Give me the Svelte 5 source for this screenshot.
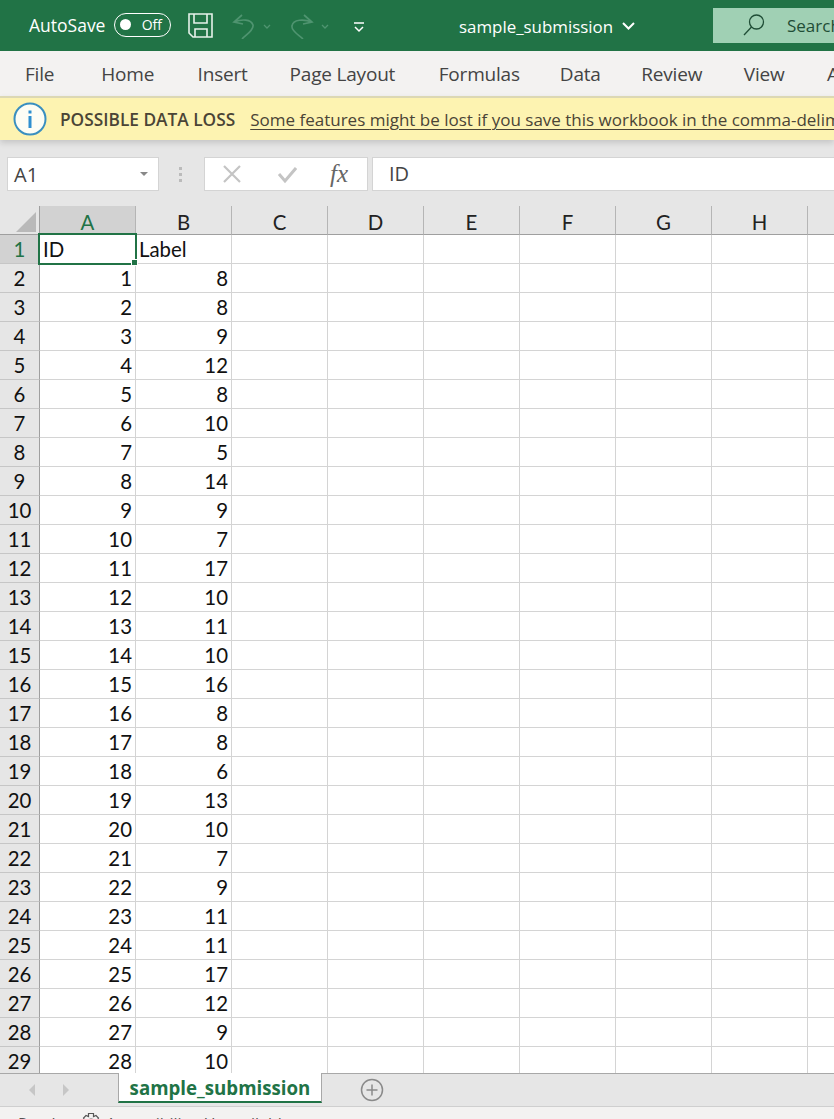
<script>
  const cols = ['A','B','C','D','E','F','G','H'];
  const a = [8,8,9,12,8,10,5,14,9,7,17,10,11,10,16,8,8,6,13,10,7,9,11,11,17,12,9,10];
  const tabs = ['File','Home','Insert','Page Layout','Formulas','Data','Review','View','Automate'];
  const rows = a.map((b,i)=>({n:i+2,id:i+1,b}));
</script>

<div class="app">
  <header class="title">
    <span class="autosave">AutoSave</span>
    <span class="toggle"><i class="knob"></i><span>Off</span></span>
    <svg class="save" viewBox="0 0 25 25" width="25" height="25" fill="none" stroke="#e6f2ea" stroke-width="1.6"><path d="M1 1h23v23H5l-4-4z"/><path d="M6 1v9h13V1M7 24v-8h12v8"/></svg>
    <svg class="undo" viewBox="0 0 40 26" width="40" height="26" fill="none" stroke="#4f9470" stroke-width="1.7"><path d="M10 2L2 9l9 2M2 9c8-3 17-3 19 3 1 5-7 10-11 14"/><path d="M32 12l3 3 3-3" stroke-width="1.3"/></svg>
    <svg class="redo" viewBox="0 0 40 26" width="40" height="26" fill="none" stroke="#4f9470" stroke-width="1.7"><path d="M14 2l8 7-9 2M22 9c-8-3-19-3-20 4-1 5 7 9 11 13"/><path d="M32 12l3 3 3-3" stroke-width="1.3"/></svg>
    <svg class="qat" viewBox="0 0 12 12" width="12" height="12" fill="none" stroke="#fff" stroke-width="1.5"><path d="M1 2h10M2 6l4 4 4-4"/></svg>
    <span class="doc">sample_submission</span>
    <svg class="chev" viewBox="0 0 13 8" width="13" height="8" fill="none" stroke="#fff" stroke-width="2"><path d="M1 1l5.500 5.500L12 1"/></svg>
    <div class="search">
      <svg viewBox="0 0 24 24" width="24" height="24" fill="none" stroke="#1f4d36" stroke-width="1.3"><circle cx="14.500" cy="9" r="7"/><path d="M9.500 14L2 22"/></svg>
      <span>Search</span>
    </div>
  </header>

  <nav class="tabs">
    {#each tabs as t}<span>{t}</span>{/each}
  </nav>

  <div class="notice">
    <svg viewBox="0 0 34 34" width="34" height="34"><circle cx="17" cy="17" r="15.500" fill="#fdfdf5" stroke="#3a8fc0" stroke-width="2"/><rect x="15.500" y="14" width="3" height="12" fill="#2f8fd0"/><rect x="15.500" y="8.500" width="3" height="3" fill="#2f8fd0"/></svg>
    <b>POSSIBLE DATA LOSS</b>
    <u>Some features might be lost if you save this workbook in the comma-delimited (.csv) format.</u>
  </div>

  <div class="formula">
    <div class="namebox"><span>A1</span><i class="caret"></i></div>
    <div class="dots"><i></i><i></i><i></i></div>
    <div class="fx">
      <svg viewBox="0 0 20 20" width="20" height="20" fill="none" stroke="#c4c4c4" stroke-width="2.200"><path d="M2 2l16 16M18 2L2 18"/></svg>
      <svg viewBox="0 0 20 20" width="20" height="20" fill="none" stroke="#c4c4c4" stroke-width="3"><path d="M2 10l6 7L19 4"/></svg>
      <em>fx</em>
    </div>
    <div class="input">ID</div>
  </div>

  <div class="sheet">
    <div class="row head">
      <div class="corner"><i></i></div>
      {#each cols as c, i}<div class="ch" class:sel={i===0}>{c}</div>{/each}
      <div class="ch"></div>
    </div>
    <div class="row">
      <div class="rh sel">1</div>
      <div class="c active">ID<i class="handle"></i></div>
      <div class="c">Label</div>
      {#each Array(7) as _}<div class="c"></div>{/each}
    </div>
    {#each rows as r}
      <div class="row">
        <div class="rh">{r.n}</div>
        <div class="c num">{r.id}</div>
        <div class="c num">{r.b}</div>
        {#each Array(7) as _}<div class="c"></div>{/each}
      </div>
    {/each}
  </div>

  <div class="sheetbar">
    <svg class="nav" viewBox="0 0 10 14" width="10" height="14"><path d="M8 1L2 7l6 6z" fill="#c6c6c6"/></svg>
    <svg class="nav" viewBox="0 0 10 14" width="10" height="14"><path d="M2 1l6 6-6 6z" fill="#c6c6c6"/></svg>
    <div class="tab">sample_submission</div>
    <svg class="add" viewBox="0 0 24 24" width="24" height="24" fill="none" stroke="#8a8a8a" stroke-width="1.500"><circle cx="12" cy="12" r="10.500"/><path d="M12 6.500v11M6.500 12h11"/></svg>
  </div>

  <footer class="status">
    <span class="ready">Ready</span>
    <svg class="gear" viewBox="0 0 20 20" width="20" height="20" fill="none" stroke="#555" stroke-width="1.200"><path d="M7.500 1.500h5v3l2.500-1 2.500 2.500-1.500 2.500h3v4h-3l1.500 2.500-2.500 2.500-2.500-1v3h-5v-3l-2.500 1-2.500-2.500 1.500-2.500h-3v-4h3l-1.500-2.500 2.500-2.500 2.500 1z"/><circle cx="10" cy="10" r="3"/></svg>
    <span class="access">Accessibility: Unavailable</span>
  </footer>
</div>

<style>
  :global(body) { margin: 0; overflow: hidden; background: #fff; }
  .app { width: 834px; height: 1119px; overflow: hidden; display: flex; flex-direction: column; font-family: "Open Sans", sans-serif; }

  .title { height: 51px; flex: none; background: #217346; color: #fff; display: flex; align-items: center; white-space: nowrap; padding-left: 29px; }
  .title > * { flex: none; }
  .autosave { font-size: 17.500px; width: 85px; margin-top: -2px; }
  .toggle { width: 57px; height: 24px; box-sizing: border-box; border: 1.500px solid #fff; border-radius: 12px; display: flex; align-items: center; justify-content: space-between; padding: 0 8px 0 5px; font-size: 14px; margin-top: -2px; }
  .knob { width: 11px; height: 11px; border-radius: 50%; background: #fff; }
  .save { margin-left: 17px; }
  .undo { margin-left: 19px; }
  .redo { margin-left: 18px; }
  .qat { margin-left: 23px; margin-top: 2px; }
  .doc { margin-left: 94px; font-size: 16.900px; margin-top: 2px; width: 163px; }
  .chev { margin-top: 1px; }
  .search { margin-left: 78px; margin-top: -1px; width: 200px; height: 35px; background: #a0d0b4; display: flex; align-items: center; color: #1f4d36; font-size: 17px; padding-left: 29px; gap: 21px; box-sizing: border-box; }

  .tabs { height: 45px; flex: none; box-sizing: border-box; background: #f3f2f1; display: flex; align-items: center; padding-left: 25px; gap: 42px; font-size: 19px; letter-spacing: -0.200px; color: #444; white-space: nowrap; }
  .tabs span:nth-child(2) { margin-left: 5px; }
  .tabs span:nth-child(3) { margin-left: 1.400px; }
  .tabs span:nth-child(4) { margin-left: 0; }
  .tabs span:nth-child(5) { margin-left: 1.600px; }
  .tabs span:nth-child(6) { margin-left: -2px; }
  .tabs span:nth-child(7) { margin-left: -1.400px; }
  .tabs span:nth-child(8) { margin-left: -0.400px; }
  .tabs span:nth-child(9) { margin-left: 0.400px; }

  .notice { height: 44px; flex: none; box-sizing: border-box; background: #fdf3b1; border-top: 2px solid #dcd8b4; display: flex; align-items: center; padding-left: 13px; white-space: nowrap; color: #4a4436; box-shadow: 0 3px 6px rgba(0,0,0,.14); position: relative; }
  .notice svg { flex: none; }
  .notice b { margin-left: 13px; font-weight: 600; font-size: 17.300px; }
  .notice u { margin-left: 15px; font-size: 17px; text-underline-offset: 3px; text-decoration-thickness: 1px; }

  .formula { height: 66px; flex: none; box-sizing: border-box; background: #e6e6e6; display: flex; align-items: flex-start; padding: 17px 0 0 7px; }
  .namebox { width: 152px; height: 34px; box-sizing: border-box; background: #fff; border: 1px solid #d4d4d4; display: flex; align-items: center; justify-content: space-between; padding: 0 10px 0 6px; font-size: 20px; color: #444; flex: none; }
  .caret { border: 4px solid transparent; border-top: 4px solid #888; border-bottom: 0; }
  .dots { width: 43px; margin-right: 2px; flex: none; height: 34px; display: flex; flex-direction: column; align-items: center; justify-content: center; gap: 3px; }
  .dots i { width: 3px; height: 3px; background: #bbb; }
  .fx { width: 164px; height: 34px; flex: none; box-sizing: border-box; background: #fff; border: 1px solid #d4d4d4; display: flex; align-items: center; padding-left: 17px; gap: 35px; }
  .fx em { font-family: "Liberation Serif", serif; font-weight: 400; font-size: 25px; color: #666; margin-left: -2px; }
  .input { flex: 1; margin-left: 4px; height: 34px; box-sizing: border-box; background: #fff; border: 1px solid #d4d4d4; border-right: 0; font-size: 20px; color: #444; padding-left: 16px; line-height: 31px; }

  .sheet { flex: 1; min-height: 0; overflow: hidden; font-family: Lato, sans-serif; font-size: 20.400px; color: #111; }
  .row { display: flex; height: 29px; }
  .head { background: #e6e6e6; }
  .corner { width: 40px; height: 29px; flex: none; box-sizing: border-box; border-right: 1px solid #9f9f9f; border-bottom: 1px solid #9f9f9f; display: flex; align-items: flex-end; justify-content: flex-end; padding: 0 3px 2px 0; }
  .corner i { width: 0; height: 0; border-left: 20px solid transparent; border-bottom: 20px solid #b9b9b9; }
  .ch { width: 96px; flex: none; box-sizing: border-box; border-right: 1px solid #b5b5b5; border-bottom: 1px solid #9f9f9f; text-align: center; line-height: 32px; height: 29px; overflow: hidden; color: #222; }
  .ch.sel { background: #d2d2d2; color: #217346; }
  .rh { width: 40px; flex: none; box-sizing: border-box; background: #e6e6e6; border-right: 1px solid #9f9f9f; border-bottom: 1px solid #c6c6c6; text-align: center; line-height: 28px; height: 29px; }
  .rh.sel { background: #d2d2d2; color: #217346; }
  .c { width: 96px; flex: none; box-sizing: border-box; background: #fff; border-right: 1px solid #d4d4d4; border-bottom: 1px solid #d4d4d4; padding: 0 3px; line-height: 28px; height: 29px; overflow: hidden; }
  .c.num { text-align: right; }
  .c.active { overflow: visible; position: relative; border-color: transparent; z-index: 1; }
  .c.active::after { content: ""; position: absolute; inset: -2px; border: 2px solid #217346; pointer-events: none; }
  .handle { position: absolute; right: -3px; bottom: -3px; width: 5px; height: 5px; background: #217346; border: 1px solid #fff; box-sizing: content-box; z-index: 2; }

  .sheetbar { height: 34px; flex: none; box-sizing: border-box; background: #e6e6e6; border-top: 1px solid #a8a8a8; border-bottom: 1px solid #cfcfcf; display: flex; align-items: flex-start; padding-left: 27px; position: relative; }
  .nav { margin-top: 9px; margin-right: 24px; flex: none; }
  .nav:nth-child(2) { margin-right: 47px; }
  .tab { height: 30px; margin-top: -1px; width: 204px; box-sizing: border-box; background: #fff; border: 1px solid #a8a8a8; border-top: 0; border-bottom: 2px solid #217346; color: #217346; font-weight: 700; font-size: 18.700px; text-align: center; line-height: 29px; flex: none; }
  .add { margin: 4px 0 0 38px; flex: none; }

  .status { flex: none; height: 12px; background: #f3f2f1; position: relative; display: flex; align-items: flex-start; font-size: 16px; line-height: 22px; color: #555; overflow: hidden; white-space: nowrap; }
  .ready { margin: 6px 0 0 18px; width: 63px; flex: none; }
  .gear { margin-top: 5px; flex: none; }
  .access { margin: 6px 0 0 5px; }
</style>
